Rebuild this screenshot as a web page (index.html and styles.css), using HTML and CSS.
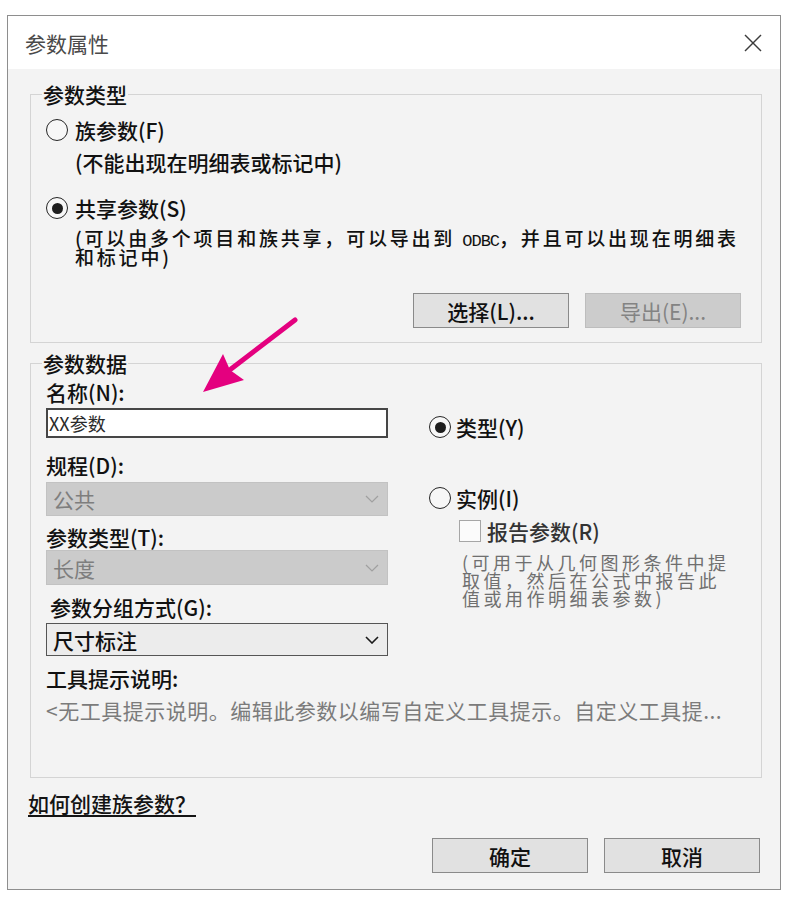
FILE: index.html
```html
<!DOCTYPE html>
<html lang="zh-CN">
<head>
<meta charset="utf-8">
<title>参数属性</title>
<link rel="stylesheet" href="styles.css">
</head>
<body>
<div class="dialog">
  <div class="titlebar">
    <span class="title">参数属性</span>
    <svg class="close" width="18" height="18" viewBox="0 0 18 18"><line x1="1" y1="1" x2="17" y2="17"/><line x1="17" y1="1" x2="1" y2="17"/></svg>
  </div>
  <div class="content">
    <fieldset class="group group-type">
      <legend>参数类型</legend>
      <div class="group-body">
        <div class="radio-row r1"><span class="radio"></span><span>族参数(F)</span></div>
        <div class="desc d1">(不能出现在明细表或标记中)</div>
        <div class="radio-row r2"><span class="radio checked"></span><span>共享参数(S)</span></div>
        <div class="desc d2">
          <div class="d2-line">(可以由多个项目和族共享，可以导出到 <span class="mono">ODBC</span>，并且可以出现在明细表</div>
          <div class="d2-line">和标记中)</div>
        </div>
        <div class="btn-row">
          <button class="btn">选择(L)...</button>
          <button class="btn disabled">导出(E)...</button>
        </div>
      </div>
    </fieldset>

    <fieldset class="group group-data">
      <legend>参数数据</legend>
      <div class="group-body">
        <div class="data-grid">
          <div class="left-col">
            <div class="lbl lbl-name">名称(N):</div>
            <div class="input">XX参数</div>
            <div class="lbl lbl-disc">规程(D):</div>
            <div class="select sel-disc disabled"><span>公共</span><svg class="chev" width="14" height="8" viewBox="0 0 14 8"><polyline points="1,1 7,7 13,1"/></svg></div>
            <div class="lbl lbl-type">参数类型(T):</div>
            <div class="select sel-type disabled"><span>长度</span><svg class="chev" width="14" height="8" viewBox="0 0 14 8"><polyline points="1,1 7,7 13,1"/></svg></div>
            <div class="lbl lbl-group">参数分组方式(G):</div>
            <div class="select sel-group"><span>尺寸标注</span><svg class="chev" width="14" height="8" viewBox="0 0 14 8"><polyline points="1,1 7,7 13,1"/></svg></div>
          </div>
          <div class="right-col">
            <div class="radio-row rt"><span class="radio checked"></span><span>类型(Y)</span></div>
            <div class="radio-row ri"><span class="radio"></span><span>实例(I)</span></div>
            <div class="check-row"><span class="checkbox"></span><span>报告参数(R)</span></div>
            <div class="rdesc">
              <div class="rdesc-line">(可用于从几何图形条件中提</div>
              <div class="rdesc-line">取值，然后在公式中报告此</div>
              <div class="rdesc-line">值或用作明细表参数)</div>
            </div>
          </div>
        </div>
        <div class="lbl tip-label">工具提示说明:</div>
        <div class="tip-text">&lt;无工具提示说明。编辑此参数以编写自定义工具提示。自定义工具提...</div>
      </div>
    </fieldset>

    <a class="help-link" href="#">如何创建族参数？</a>

    <div class="footer">
      <button class="btn btn-foot">确定</button>
      <button class="btn btn-foot">取消</button>
    </div>
  </div>
</div>

<svg class="arrow" width="799" height="911" viewBox="0 0 799 911">
  <line x1="295" y1="320" x2="231" y2="369"/>
  <polygon points="203,392 223,354 230,370 244,380"/>
</svg>
</body>
</html>
```

FILE: styles.css
```css
html, body {
  margin: 0;
  padding: 0;
  background: #ffffff;
}

body {
  font-family: "Noto Sans CJK SC", "Noto Sans", "Liberation Sans", sans-serif;
  font-size: 21px;
  font-weight: 500;
  color: #111111;
  line-height: 24px;
}

.dialog {
  margin: 15px 0 0 7px;
  width: 772px;
  border: 1px solid #8e8e8e;
  background: #f3f3f3;
}

.titlebar {
  height: 53px;
  background: #ffffff;
  display: flex;
  align-items: center;
  justify-content: space-between;
  padding: 0 18px 0 17px;
}

.title {
  color: #4a4a4a;
  font-weight: 400;
  line-height: 24px;
}

.close line {
  stroke: #3c3c3c;
  stroke-width: 1.4;
}

.content {
  padding: 13px 18px 16px 22px;
}

.group {
  margin: 0;
  border: 1px solid #d4d4d4;
  min-width: 0;
}

.group legend {
  margin: 0;
  padding: 0 1px;
  line-height: 24px;
  color: #111;
}

.group-body {
  padding-left: 4px;
}

.group-type {
  padding: 0 20px 14px 11px;
}

.group-data {
  margin-top: 8px;
  padding: 0 20px 55px 11px;
}

.radio-row {
  display: flex;
  align-items: center;
  gap: 7px;
  height: 24px;
}

.radio {
  width: 22px;
  height: 22px;
  box-sizing: border-box;
  border: 1.6px solid #262626;
  border-radius: 50%;
  background: #f7f7f7;
  display: inline-flex;
  align-items: center;
  justify-content: center;
  flex: none;
}

.radio.checked::after {
  content: "";
  width: 11px;
  height: 11px;
  border-radius: 50%;
  background: #1e1e1e;
}

.r1 { margin-top: 12px; }
.r2 { margin-top: 22px; }

.desc {
  padding-left: 29px;
}

.d1 { margin-top: 8px; }

.d2 {
  margin-top: 8px;
}

.d2-line {
  height: 19px;
  font-size: 19px;
  letter-spacing: 2.8px;
  line-height: 19px;
  white-space: nowrap;
}

.mono {
  font-family: "Liberation Mono", "DejaVu Sans Mono", monospace;
  font-size: 17px;
  letter-spacing: -1px;
}

.btn-row {
  margin-top: 27px;
  display: flex;
  justify-content: flex-end;
  gap: 16px;
}

.btn {
  width: 156px;
  height: 35px;
  box-sizing: border-box;
  border: 1px solid #8a8a8a;
  background: #e1e1e1;
  font-family: inherit;
  font-size: 21px;
  font-weight: 500;
  color: #111;
  padding: 0;
  line-height: 24px;
}

.btn.disabled {
  background: #cccccc;
  border-color: #bdbdbd;
  color: #838383;
  font-weight: 400;
}

.data-grid {
  display: grid;
  grid-template-columns: 342px 1fr;
  column-gap: 41px;
}

.left-col {
  display: flex;
  flex-direction: column;
}

.lbl {
  line-height: 24px;
}

.lbl-name { margin-top: 5px; }

.input {
  margin-top: 4px;
  height: 30px;
  box-sizing: border-box;
  border: 2px solid #464646;
  background: #ffffff;
  font-size: 18px;
  font-weight: 400;
  line-height: 26px;
  padding-left: 1px;
  color: #2a2a2a;
}

.lbl-disc { margin-top: 15px; }
.lbl-type { margin-top: 9px; }
.lbl-group { margin-top: 10px; padding-left: 4px; }

.select {
  box-sizing: border-box;
  display: flex;
  align-items: center;
  justify-content: space-between;
  padding: 0 8px 0 6px;
  border: 1px solid #555;
  background: #ececec;
  color: #111;
}

.select .chev polyline {
  fill: none;
  stroke: #1a1a1a;
  stroke-width: 1.6;
}

.select.disabled {
  background: #cbcbcb;
  border-color: #c2c2c2;
  color: #7e7e7e;
  font-weight: 400;
}

.select.disabled .chev polyline {
  stroke: #a0a0a0;
  stroke-width: 1.2;
}

.sel-disc { margin-top: 5px; height: 34px; }
.sel-type { margin-top: 1px; height: 35px; }
.sel-group { margin-top: 4px; height: 33px; }

.right-col {
  display: flex;
  flex-direction: column;
}

.rt { margin-top: 40px; gap: 5px; }
.ri { margin-top: 47px; gap: 5px; }

.check-row {
  margin-top: 9px;
  padding-left: 30px;
  display: flex;
  align-items: center;
  gap: 6px;
  height: 24px;
  color: #333;
}

.checkbox {
  width: 22px;
  height: 22px;
  box-sizing: border-box;
  border: 1px solid #a6a6a6;
  background: #fbfbfb;
  flex: none;
}

.rdesc {
  margin-top: 10px;
  padding-left: 33px;
  color: #6f6f6f;
  font-weight: 400;
}

.rdesc-line {
  height: 18px;
  font-size: 18px;
  letter-spacing: 3.5px;
  line-height: 18px;
  white-space: nowrap;
}

.tip-label { margin-top: 10px; }

.tip-text {
  margin-top: 8px;
  color: #7b7b7b;
  font-weight: 400;
  letter-spacing: 0.5px;
  white-space: nowrap;
}

.help-link {
  display: block;
  width: fit-content;
  margin: 13px 0 0 -2px;
  color: #141414;
  text-decoration: underline;
  text-underline-offset: 3px;
  line-height: 24px;
}

.footer {
  margin-top: 23px;
  margin-right: 2px;
  display: flex;
  justify-content: flex-end;
  gap: 16px;
}

.arrow {
  position: absolute;
  left: 0;
  top: 0;
  pointer-events: none;
}

.arrow line {
  stroke: #e4007f;
  stroke-width: 5;
  stroke-linecap: round;
}

.arrow polygon {
  fill: #e4007f;
}
```
